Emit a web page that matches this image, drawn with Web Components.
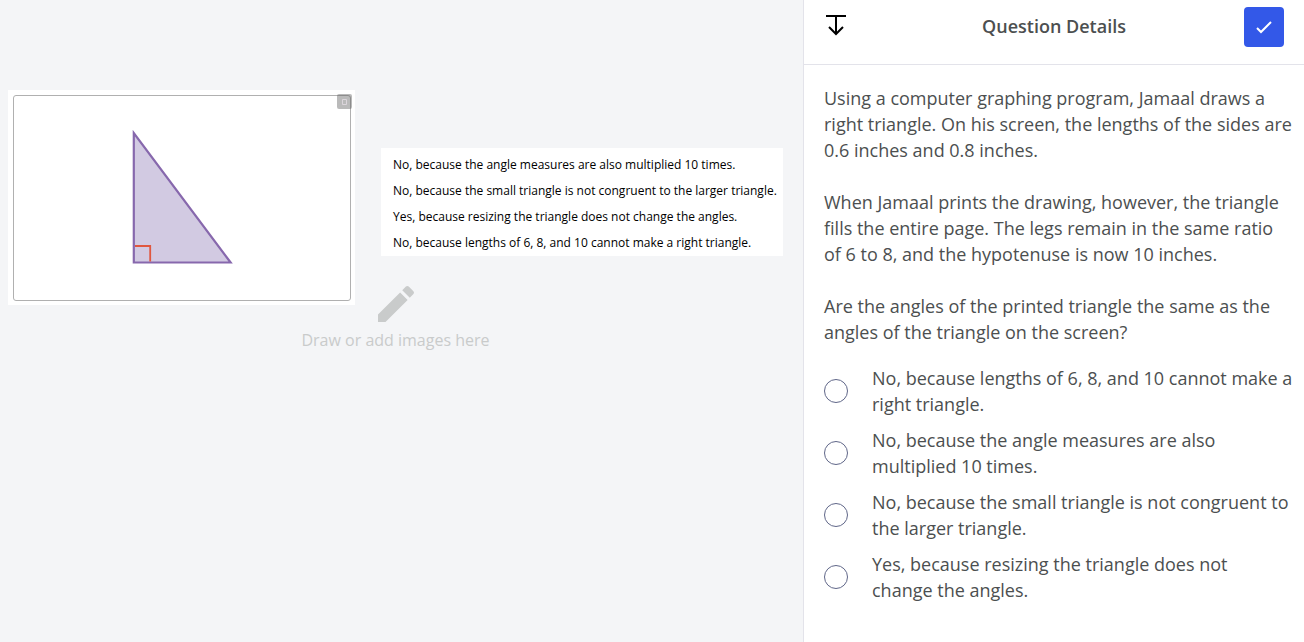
<!DOCTYPE html>
<html lang="en">
<head>
<meta charset="utf-8">
<title>Question Details</title>
<style>
html, body {
  height: 100%;
  margin: 0;
}
body {
  font-family: "Open Sans", "Noto Sans", sans-serif;
  font-size: 18px;
  line-height: 26px;
  color: #4c4f50;
  background: #f4f5f7;
}
</style>
</head>
<body>
<whiteboard-app>
  <drawing-canvas slot="canvas">
    <triangle-card></triangle-card>
    <answer-note>
      <p>No, because the angle measures are also multiplied 10 times.</p>
      <p>No, because the small triangle is not congruent to the larger triangle.</p>
      <p>Yes, because resizing the triangle does not change the angles.</p>
      <p>No, because lengths of 6, 8, and 10 cannot make a right triangle.</p>
    </answer-note>
    <span slot="hint">Draw or add images here</span>
  </drawing-canvas>
  <question-panel slot="panel">
    <span slot="title">Question Details</span>
    <p>Using a computer graphing program, Jamaal draws a right triangle. On his screen, the lengths of the sides are 0.6 inches and 0.8 inches.</p>
    <p>When Jamaal prints the drawing, however, the triangle fills the entire page. The legs remain in the same ratio of 6 to 8, and the hypotenuse is now 10 inches.</p>
    <p>Are the angles of the printed triangle the same as the angles of the triangle on the screen?</p>
    <answer-list slot="answers"></answer-list>
  </question-panel>
</whiteboard-app>

<script>
class BaseElement extends HTMLElement {
  constructor() {
    super();
    this.attachShadow({ mode: "open" });
  }
  connectedCallback() {
    this.shadowRoot.innerHTML = `<style>${this.css}</style>${this.html}`;
  }
}

class WhiteboardApp extends BaseElement {
  css = `
:host{
    display:grid;
    grid-template-columns: minmax(0, 1fr) 501px;
    min-height:100%;
}
`;
  html = `<slot name="canvas"></slot><slot name="panel"></slot>`;
}

class DrawingCanvas extends BaseElement {
  css = `
:host{
    display:flex;
    flex-direction:column;
    align-items:center;
    justify-content:center;
    position:relative;
    padding-block-end:10px;
    padding-inline-end:12px;
    background:#f4f5f7;
}
.hint{
    display:flex;
    flex-direction:column;
    align-items:center;
    color:#c9cbcb;
    font-size:16px;
    line-height:24px;
}
.hint svg{
    display:block;
    width:48px;
    height:48px;
    fill:currentColor;
}
/* pictures dropped on the free canvas */
::slotted(triangle-card){
    position:absolute;
    left:8px;
    top:90px;
}
::slotted(answer-note){
    position:absolute;
    left:381px;
    top:148px;
}
`;
  html = `
    <slot></slot>
    <div class="hint">
      <svg viewBox="0 0 24 24" aria-hidden="true"><path d="M3 17.25V21h3.75L17.81 9.94l-3.75-3.75L3 17.25zM20.71 7.04a1 1 0 0 0 0-1.41l-2.34-2.34a1 1 0 0 0-1.41 0l-1.83 1.83 3.75 3.75 1.83-1.83z"/></svg>
      <slot name="hint"></slot>
    </div>`;
}

class TriangleCard extends BaseElement {
  css = `
:host{
    display:block;
    padding:5px 4px 4px 5px;
    background:#fff;
}
.frame{
    position:relative;
    border:1px solid #b0b0b0;
    border-radius:3px;
}
.drawing{
    display:block;
    width:336px;
    height:204px;
}
button{
    position:absolute;
    right:-2px;
    top:-2px;
    display:grid;
    place-items:center;
    width:15px;
    height:15px;
    padding:0;
    border:0;
    border-radius:2px;
    background:rgba(90, 90, 90, 0.42);
}
button svg{
    width:15px;
    height:15px;
}
`;
  html = `
    <div class="frame">
      <svg class="drawing" viewBox="14 96 336 204" role="img" aria-label="Right triangle">
        <path d="M133.8 133V262.5H230.6Z" fill="#d2cae2" stroke="#8768ad" stroke-width="2.2"/>
        <path d="M135 246H150.2V261.4" fill="none" stroke="#e0573f" stroke-width="1.8"/>
      </svg>
      <button type="button" aria-label="Expand"><svg viewBox="0 0 15 15"><path d="M5.5 5.5h4v5h-4z" fill="none" stroke="#dcd6dc"/></svg></button>
    </div>`;
}

class AnswerNote extends BaseElement {
  css = `
:host{
    display:flex;
    flex-direction:column;
    padding:4px 6px 0 12px;
    color:#000;
    background:#fff;
    font-size:12px;
    line-height:26px;
    white-space:nowrap;
}
::slotted(p){
    margin:0;
}
`;
  html = `<slot></slot>`;
}

class QuestionPanel extends BaseElement {
  css = `
:host{
    display:block;
    border-inline-start:1px solid #e3e3ea;
    background:#fff;
}
header{
    display:grid;
    grid-template-columns: 1fr auto 1fr;
    align-items:start;
    padding:7px 20px 17px;
    border-block-end:1px solid #e3e3ea;
}
h1{
    margin:0;
    font-size:18px;
    line-height:38px;
    font-weight:600;
}
button{
    display:grid;
    place-items:center;
    padding:0;
    border:0;
    background:none;
    cursor:pointer;
}
.collapse{
    justify-self:start;
    width:24px;
    height:36px;
}
.done{
    justify-self:end;
    width:40px;
    height:40px;
    border-radius:4px;
    background:#3358e8;
}
svg{
    display:block;
    fill:none;
}
.body{
    display:flex;
    flex-direction:column;
    gap:26px;
    padding:20px 11px 38px 20px;
}
::slotted(p){
    margin:0;
}
::slotted(answer-list){
    margin-block-start:-6px;
}
`;
  html = `
    <header>
      <button class="collapse" type="button" aria-label="Collapse panel">
        <svg width="24" height="24" viewBox="0 0 24 24"><path d="M2 3h20M12 3v18M5 14l7 7 7-7" stroke="#000" stroke-width="2"/></svg>
      </button>
      <h1><slot name="title"></slot></h1>
      <button class="done" type="button" aria-label="Done">
        <svg width="24" height="24" viewBox="0 0 24 24"><path d="M5 13l4 4L19 7" stroke="#fff" stroke-width="2"/></svg>
      </button>
    </header>
    <div class="body">
      <slot></slot>
      <slot name="answers"></slot>
    </div>`;
}

class AnswerList extends BaseElement {
  answers = [
    "No, because lengths of 6, 8, and 10 cannot make a right triangle.",
    "No, because the angle measures are also multiplied 10 times.",
    "No, because the small triangle is not congruent to the larger triangle.",
    "Yes, because resizing the triangle does not change&nbsp;the angles.",
  ];
  css = `
:host{
    display:flex;
    flex-direction:column;
    gap:10px;
}
label{
    display:grid;
    grid-template-columns: 24px 1fr;
    column-gap:24px;
    align-items:center;
}
input{
    appearance:none;
    box-sizing:border-box;
    width:24px;
    height:24px;
    margin:0;
    border:1px solid #5f6688;
    border-radius:50%;
    background:#fff;
}
input:checked{
    border:7px solid #3358e8;
}
`;
  get html() {
    return this.answers
      .map(
        (text, i) =>
          `<label for="answer-${i}"><input type="radio" name="answer" id="answer-${i}"><span>${text}</span></label>`
      )
      .join("");
  }
}

customElements.define("whiteboard-app", WhiteboardApp);
customElements.define("drawing-canvas", DrawingCanvas);
customElements.define("triangle-card", TriangleCard);
customElements.define("answer-note", AnswerNote);
customElements.define("question-panel", QuestionPanel);
customElements.define("answer-list", AnswerList);
</script>
</body>
</html>
